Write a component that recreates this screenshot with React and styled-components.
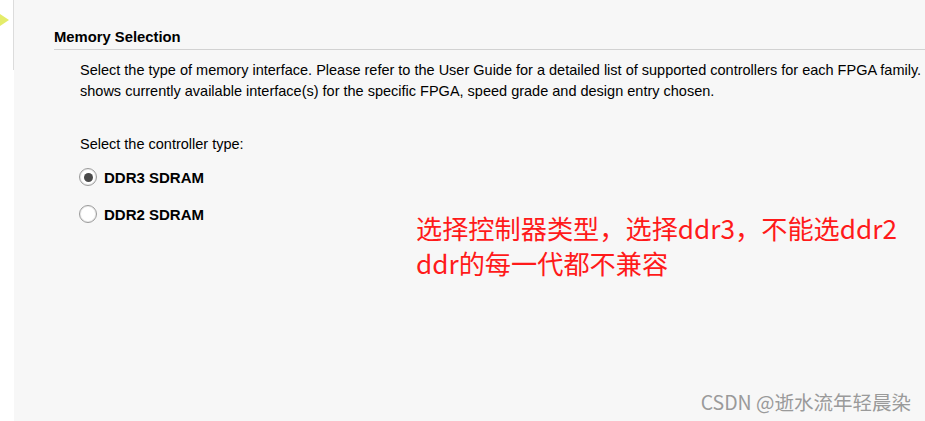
import React from 'react';
import styled, { createGlobalStyle } from 'styled-components';

const GlobalStyle = createGlobalStyle`
  html, body {
    margin: 0;
    padding: 0;
    overflow: hidden;
    background: #ffffff;
  }
`;

const Page = styled.div`
  display: flex;
  width: 925px;
  height: 421px;
  overflow: hidden;
  font-family: "Liberation Sans", Arial, sans-serif;
`;

const Gutter = styled.div`
  position: relative;
  width: 13px;
  flex: none;
  background: #ffffff;
  border-right: 1px solid transparent;

  &::before {
    content: '';
    position: absolute;
    right: -1px;
    top: 0;
    width: 1px;
    height: 70px;
    background: #dcdcdc;
  }
`;

const Arrow = styled.svg`
  position: absolute;
  left: 0;
  top: 14px;
`;

const Panel = styled.div`
  flex: 1;
  background: #f7f7f7;
  padding: 28px 0 0 40px;
  position: relative;
  overflow: hidden;
`;

const Heading = styled.div`
  font-weight: bold;
  font-size: 14.8px;
  line-height: 18px;
  color: #000;
  padding-bottom: 3px;
  border-bottom: 1px solid #d2d2d2;
`;

const Body = styled.div`
  padding: 10px 0 0 26px;
  color: #000;
  font-size: 14.5px;
`;

const Line = styled.div`
  white-space: nowrap;
  line-height: 21px;
`;

const Prompt = styled.div`
  margin-top: 32px;
  line-height: 21px;
`;

const Options = styled.div`
  display: flex;
  flex-direction: column;
  gap: 17px;
  margin-top: 12px;
`;

const Option = styled.label`
  display: flex;
  align-items: center;
  gap: 7px;
  font-weight: bold;
  font-size: 15px;
  height: 20px;
`;

const Radio = styled.span`
  box-sizing: border-box;
  width: 18px;
  height: 18px;
  border-radius: 50%;
  border: 1px solid #9a9a9a;
  background: #fff;
  box-shadow: inset 0 0 0 1px #ececec;
  display: flex;
  align-items: center;
  justify-content: center;
  margin-left: -1px;

  &::after {
    content: '';
    width: 9px;
    height: 9px;
    border-radius: 50%;
    background: ${p => (p.checked ? '#4a4a4a' : 'transparent')};
  }
`;

const Note = styled.div`
  position: absolute;
  left: 402px;
  top: 211px;
  color: #ff1a1a;
  font-family: "Noto Sans CJK SC", "Noto Sans", sans-serif;
  font-size: 26.2px;
  line-height: 35px;
  white-space: nowrap;
`;

const Watermark = styled.div`
  position: absolute;
  right: 14px;
  bottom: 5px;
  color: #9a9a9a;
  font-family: "Noto Sans CJK SC", "Noto Sans", sans-serif;
  font-size: 19.5px;
  white-space: nowrap;
`;

const App = () => {
  return (
    <>
      <GlobalStyle />
      <Page>
        <Gutter>
          <Arrow width="9" height="12" viewBox="0 0 9 12">
            <polygon points="0,0 9,6 0,12" fill="#e4ec6a" />
          </Arrow>
        </Gutter>
        <Panel>
          <Heading>Memory Selection</Heading>
          <Body>
            <Line>Select the type of memory interface. Please refer to the User Guide for a detailed list of supported controllers for each FPGA family.</Line>
            <Line>shows currently available interface(s) for the specific FPGA, speed grade and design entry chosen.</Line>
            <Prompt>Select the controller type:</Prompt>
            <Options>
              <Option>
                <Radio checked />
                DDR3 SDRAM
              </Option>
              <Option>
                <Radio />
                DDR2 SDRAM
              </Option>
            </Options>
          </Body>
          <Note>
            选择控制器类型，选择ddr3，不能选ddr2
            <br />
            ddr的每一代都不兼容
          </Note>
          <Watermark>CSDN @逝水流年轻晨染</Watermark>
        </Panel>
      </Page>
    </>
  );
};

export default App;
